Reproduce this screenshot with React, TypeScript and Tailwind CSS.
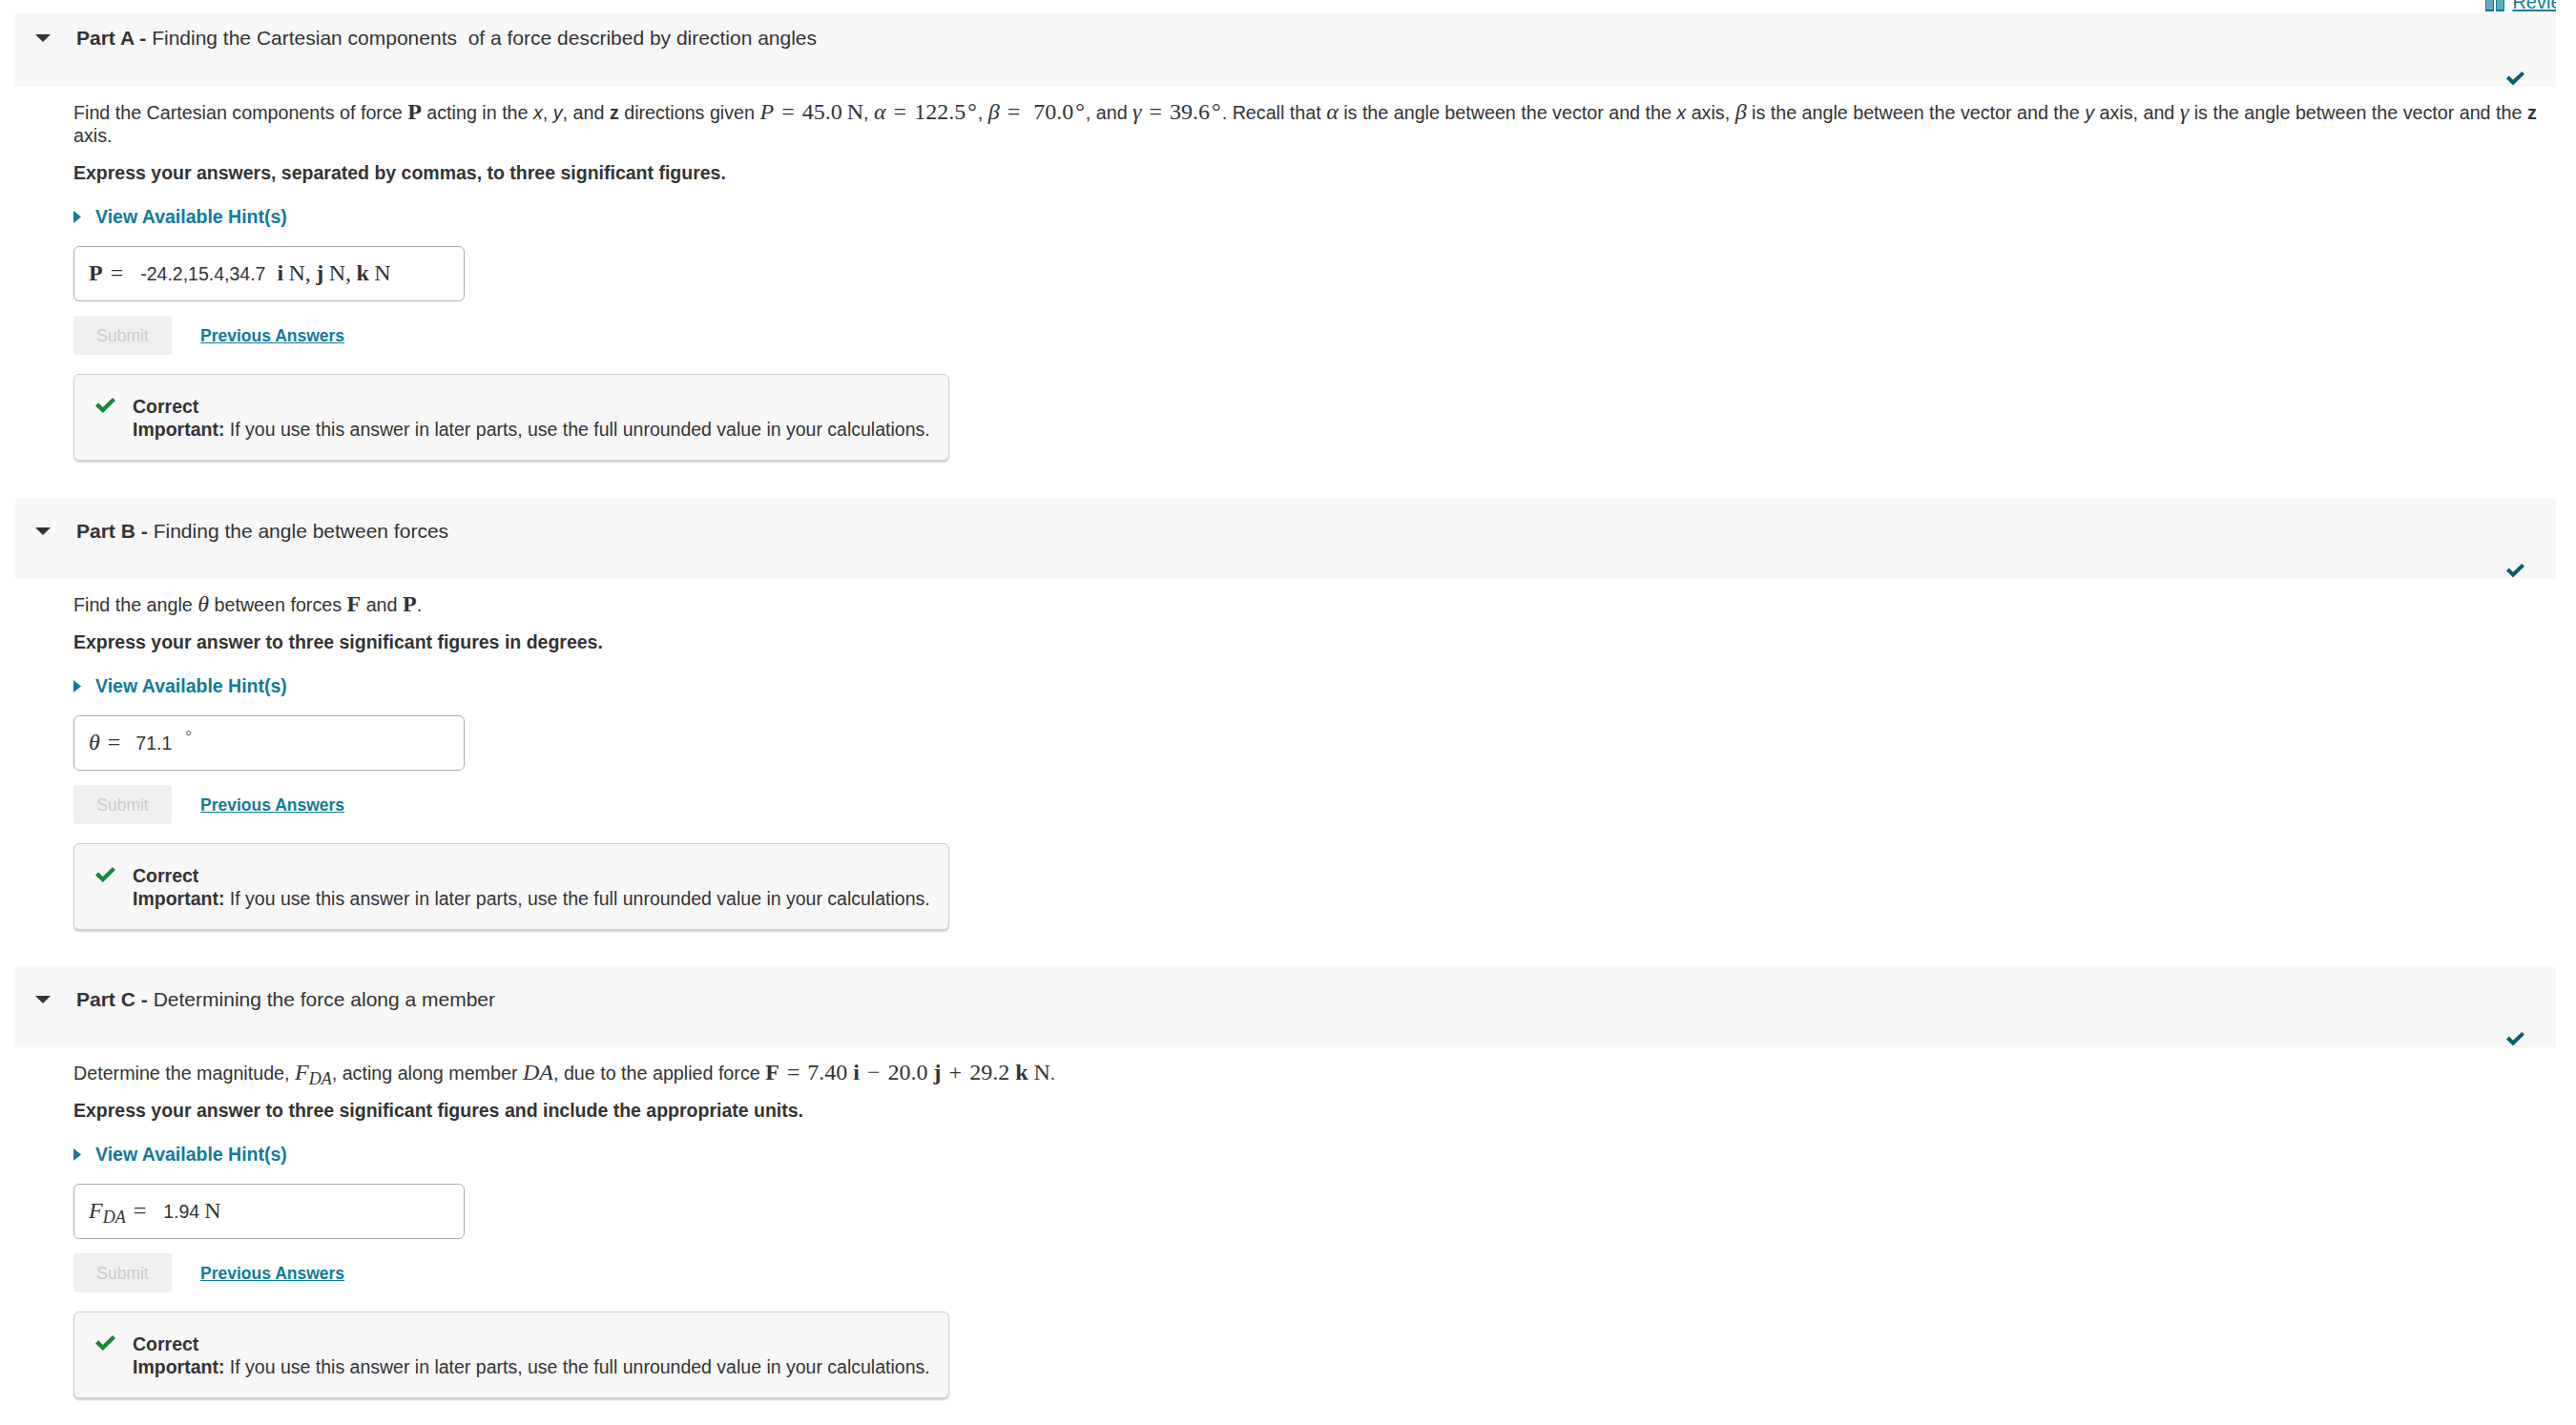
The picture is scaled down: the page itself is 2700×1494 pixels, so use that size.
import React from "react";

type Kids = { children: React.ReactNode };

// math bits, rendered in a serif like the MathJax output
const Mi = ({ children }: Kids) => (
  <span className="font-['Liberation_Serif',serif] text-[24px] leading-[0px] italic">{children}</span>
);
const Mb = ({ children }: Kids) => (
  <span className="font-['Liberation_Serif',serif] text-[24px] leading-[0px] font-bold">{children}</span>
);
const Mr = ({ children }: Kids) => (
  <span className="font-['Liberation_Serif',serif] text-[24px] leading-[0px]">{children}</span>
);
const Eq = () => (
  <span className="font-['Liberation_Serif',serif] text-[24px] leading-[0px] mx-[8px]">=</span>
);
const Op = ({ children }: Kids) => (
  <span className="font-['Liberation_Serif',serif] text-[24px] leading-[0px] mx-[8px]">{children}</span>
);
const Sub = ({ children }: Kids) => (
  <span className="relative top-[5px] font-['Liberation_Serif',serif] text-[18px] leading-[0px] italic">{children}</span>
);
const Deg = () => (
  <span className="ml-[2px] mr-[1px] font-['Liberation_Serif',serif] text-[24px] leading-[0px]">°</span>
);

const HeaderCheck = () => (
  <svg width="19" height="14" viewBox="0 0 19 14">
    <polygon points="0,7.4 2.8,4.6 7,8.8 16.2,0 19,2.8 7,14.4" fill="#0f5a70" />
  </svg>
);

const GreenCheck = () => (
  <svg width="21" height="16" viewBox="0 0 21 16">
    <polygon points="0,8.4 3.1,5.3 7.8,9.9 18,0 21,3.1 7.8,16" fill="#168a3c" />
  </svg>
);

interface PartProps {
  letter: string;
  title: string;
  bandClass: string;
  problem: React.ReactNode;
  express: string;
  answer: React.ReactNode;
}

function Part({ letter, title, bandClass, problem, express, answer }: PartProps) {
  return (
    <section>
      <div className={`relative bg-[#f7f7f7] pl-[21px] ${bandClass}`}>
        <div className="flex items-center text-[21px] leading-[24px] text-[#333]">
          <svg width="16" height="8" viewBox="0 0 16 8" className="mr-[27px]">
            <polygon points="0,0 16,0 8,8" fill="#333" />
          </svg>
          <span className="font-bold">Part {letter} -</span>
          <span className="ml-[6px] whitespace-pre">{title}</span>
        </div>
        <div className="absolute right-[33px] bottom-[2px]">
          <HeaderCheck />
        </div>
      </div>

      <div className="pl-[61px] text-[19.5px] leading-[24px] text-[#333]">
        <div className="mt-[15px] text-[19.7px]">{problem}</div>
        <div className="mt-[15px] font-bold">{express}</div>
        <div className="mt-[22px] flex items-center gap-[15px] font-bold text-[#107b99]">
          <svg width="8" height="13" viewBox="0 0 8 13">
            <polygon points="0,0 8,6.5 0,13" fill="#107b99" />
          </svg>
          <span className="text-[19.5px]">View Available Hint(s)</span>
        </div>
        <div className="mt-[19px] flex h-[58px] w-[410px] items-center rounded-[6px] border border-[#adadad] pl-[15px] leading-[24px]">
          {answer}
        </div>
        <div className="mt-[15px] flex items-center">
          <div className="flex h-[41px] w-[103px] items-center justify-center rounded-[3px] bg-[#efefef] text-[17.5px] text-[#cccccc]">
            Submit
          </div>
          <a className="ml-[30px] text-[17.5px] font-bold text-[#107b99] underline">Previous Answers</a>
        </div>
        <div className="mt-[20px] flex h-[91px] w-[918px] items-center rounded-[6px] border border-[#cdcdcd] bg-[#f7f7f7] pl-[22px] shadow-[0_2px_2px_rgba(0,0,0,0.18)]">
          <div className="flex items-start">
            <div className="mt-[3px]">
              <GreenCheck />
            </div>
            <div className="ml-[18px] text-[19.5px] leading-[24px]">
              <div className="font-bold">Correct</div>
              <div>
                <span className="font-bold">Important:</span> If you use this answer in later parts, use the full
                unrounded value in your calculations.
              </div>
            </div>
          </div>
        </div>
      </div>
    </section>
  );
}

export default function App() {
  return (
    <div className="min-h-[1494px] bg-white pl-[16px] pr-[21px] font-['Liberation_Sans',Arial,sans-serif]">
      {/* Review link, mostly scrolled off the top */}
      <div className="flex h-[14px] items-end justify-end overflow-hidden">
        <a className="-mr-[20px] flex items-end gap-[8px] text-[20px] leading-[24px] text-[#107b99] underline">
          <svg width="20" height="24" viewBox="0 0 20 24">
            <path d="M0 6h9v16H0zM11 6h9v16h-9z" fill="#107b99" />
            <path d="M1 8h7v12H1zM12 8h7v12h-7z" fill="#fff" opacity="0.35" />
          </svg>
          Review
        </a>
      </div>

      <Part
        letter="A"
        title={"Finding the Cartesian components  of a force described by direction angles"}
        bandClass="h-[77px] pt-[14px]"
        problem={
          <>
            Find the Cartesian components of force <Mb>P</Mb> acting in the <i>x</i>, <i>y</i>, and <b>z</b> directions
            given <Mi>P</Mi>
            <Eq />
            <Mr>45.0</Mr>
            <span className="ml-[5px]">
              <Mr>N</Mr>
            </span>
            , <Mi>α</Mi>
            <Eq />
            <Mr>122.5</Mr>
            <Deg />, <Mi>β</Mi>
            <Eq />
            <Mr> 70.0</Mr>
            <Deg />, and <Mi>γ</Mi>
            <Eq />
            <Mr>39.6</Mr>
            <Deg />. Recall that <Mi>α</Mi> is the angle between the vector and the <i>x</i> axis, <Mi>β</Mi> is the
            angle between the vector and the <i>y</i> axis, and <Mi>γ</Mi> is the angle between the vector and the{" "}
            <b>z</b>
            <br />
            axis.
          </>
        }
        express="Express your answers, separated by commas, to three significant figures."
        answer={
          <span className="flex items-baseline">
            <Mb>P</Mb>
            <Eq />
            <span className="ml-[10px] text-[19.5px]">-24.2,15.4,34.7</span>
            <span className="ml-[12px]">
              <Mb>i</Mb> <Mr>N,</Mr> <Mb>j</Mb> <Mr>N,</Mr> <Mb>k</Mb> <Mr>N</Mr>
            </span>
          </span>
        }
      />

      <div className="mt-[39px]">
        <Part
          letter="B"
          title="Finding the angle between forces"
          bandClass="h-[85px] pt-[23px]"
          problem={
            <>
              Find the angle <Mi>θ</Mi> between forces <Mb>F</Mb> and <Mb>P</Mb>.
            </>
          }
          express="Express your answer to three significant figures in degrees."
          answer={
            <span className="flex items-baseline">
              <Mi>θ</Mi>
              <Eq />
              <span className="ml-[8px] text-[19.5px]">71.1</span>
              <span className="relative -top-[9px] ml-[14px] font-['Liberation_Serif',serif] text-[17px] leading-[0px] text-[#555]">°</span>
            </span>
          }
        />
      </div>

      <div className="mt-[39px]">
        <Part
          letter="C"
          title="Determining the force along a member"
          bandClass="h-[84px] pt-[22px]"
          problem={
            <>
              Determine the magnitude, <Mi>F</Mi>
              <Sub>DA</Sub>, acting along member <Mi>DA</Mi>, due to the applied force <Mb>F</Mb>
              <Eq />
              <Mr>7.40</Mr>
              <span className="ml-[6px]">
                <Mb>i</Mb>
              </span>
              <Op>−</Op>
              <Mr>20.0</Mr>
              <span className="ml-[6px]">
                <Mb>j</Mb>
              </span>
              <Op>+</Op>
              <Mr>29.2</Mr>
              <span className="ml-[6px]">
                <Mb>k</Mb>
              </span>
              <span className="ml-[6px]">
                <Mr>N</Mr>
              </span>
              .
            </>
          }
          express="Express your answer to three significant figures and include the appropriate units."
          answer={
            <span className="flex items-baseline">
              <Mi>F</Mi>
              <Sub>DA</Sub>
              <Eq />
              <span className="ml-[10px] text-[19.5px]">1.94</span>
              <span className="ml-[5px]">
                <Mr>N</Mr>
              </span>
            </span>
          }
        />
      </div>
    </div>
  );
}
